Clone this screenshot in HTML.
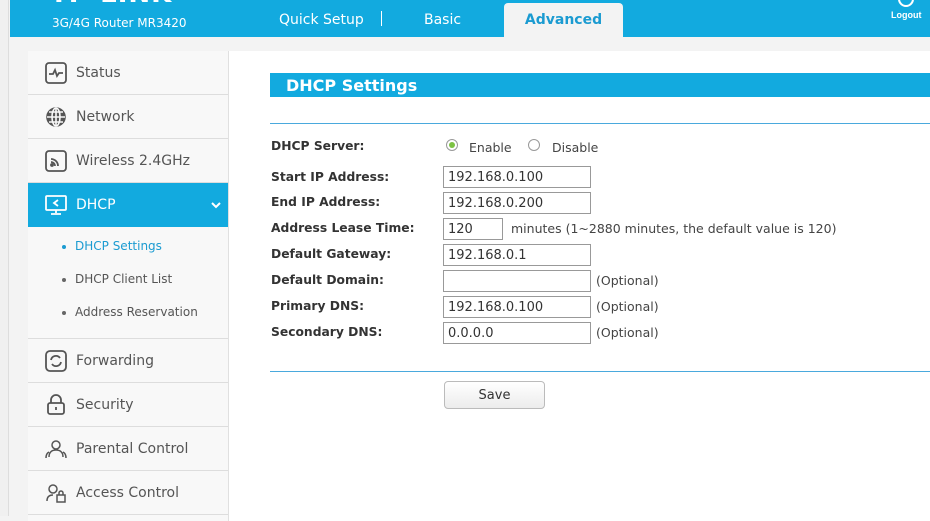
<!DOCTYPE html>
<html><head><meta charset="utf-8"><style>
*{margin:0;padding:0;box-sizing:border-box}
body{width:930px;height:516px;overflow:hidden;background:#f3f3f3;font-family:"DejaVu Sans","Liberation Sans",sans-serif;position:relative}
.strip{position:absolute;left:0;top:0;width:9px;height:516px;background:#f0f0f0;border-right:1px solid #ddd}
.hdr{position:absolute;left:10px;top:0;width:920px;height:37px;background:#12aadf}
.logo{position:absolute;left:40px;top:-21px;color:#fff;font:bold 26px "DejaVu Sans",sans-serif;letter-spacing:1px}
.model{position:absolute;left:42px;top:16px;color:#fff;font-size:12px}
.nav{position:absolute;top:12px;color:#fff;font-size:14px}
.sep{position:absolute;left:371px;top:11px;width:1px;height:15px;background:#fff}
.tab{position:absolute;left:494px;top:3px;width:119px;height:34px;background:#f3f3f3;border-radius:4px 4px 0 0;color:#1b9bd1;font:bold 14px "DejaVu Sans",sans-serif;text-align:center;line-height:34px}
.logout{position:absolute;left:881px;top:10px;color:#fff;font:bold 9px "Liberation Sans",sans-serif}
.lcirc{position:absolute;left:888px;top:-9px;width:16px;height:16px;border:2px solid #fff;border-radius:50%}
.side{position:absolute;left:28px;top:51px;width:201px;height:470px;background:#f8f8f8;border-right:1px solid #e0e0e0}
.it{height:44px;border-bottom:1px solid #ddd;font-size:14px;color:#555;position:relative}
.it svg{position:absolute;left:17px;top:11px}
.it span{position:absolute;left:48px;top:14px}
.it.act{background:#12aadf;color:#fff;border-bottom:none}
.sub{height:112px;border-bottom:1px solid #ddd;font-size:12px;color:#555;position:relative}
.sub div{position:absolute;left:47px}
.sub div:before{content:"";position:absolute;left:-13px;top:6px;width:4px;height:4px;border-radius:50%;background:#666}
.sub div.on:before{background:#1b9bd1}
.main{position:absolute;left:229px;top:51px;width:701px;height:470px;background:#fff}
.tbar{position:absolute;left:270px;top:73px;width:660px;height:24px;background:#12aadf;color:#fff;font:bold 16px "DejaVu Sans",sans-serif;padding-left:16px;line-height:25px}
.line{position:absolute;left:270px;width:660px;height:1px;background:#4aa9dd}
.lbl{position:absolute;left:271px;font:bold 12.3px "DejaVu Sans",sans-serif;color:#333}
.inp{position:absolute;left:443px;width:148px;height:22px;border:1px solid #999;font-size:13px;color:#333;padding-left:4px;line-height:22px}
.txt{position:absolute;font-size:12.5px;color:#444}
.btn{position:absolute;left:444px;top:381px;width:101px;height:28px;border:1px solid #bbb;border-radius:4px;background:linear-gradient(#fff,#ececec);text-align:center;line-height:28px;font-size:13px;color:#333}
.rad{position:absolute;width:12px;height:12px;border-radius:50%;border:1px solid #999;background:#fff}
</style></head><body>
<div class="strip"></div>
<div class="hdr">
<div class="logo">TP-LINK</div>
<div class="model">3G/4G Router MR3420</div>
<div class="nav" style="left:269px">Quick Setup</div>
<div class="sep"></div>
<div class="nav" style="left:414px">Basic</div>
<div class="tab">Advanced</div>
<div class="lcirc"></div>
<div class="logout">Logout</div>
</div>
<div class="side">
<div class="it"><svg width="22" height="22" viewBox="0 0 22 22" fill="none" stroke="#555" stroke-width="1.8"><rect x="1" y="1" width="20" height="20" rx="3"/><path d="M4 12h4l2-4 2 6 2-3h4"/></svg><span>Status</span></div>
<div class="it"><svg width="22" height="22" viewBox="0 0 22 22" fill="none" stroke="#555" stroke-width="1.6"><circle cx="11" cy="11" r="9" fill="#555"/><path d="M2 11h18M11 2v18M4 6h14M4 16h14" stroke="#f8f8f8"/><ellipse cx="11" cy="11" rx="4" ry="9" stroke="#f8f8f8"/></svg><span>Network</span></div>
<div class="it"><svg width="22" height="22" viewBox="0 0 22 22" fill="none" stroke="#555" stroke-width="1.8"><rect x="1" y="1" width="20" height="20" rx="3"/><path d="M6 9a7 7 0 0 1 7 7M6 12a4 4 0 0 1 4 4"/><circle cx="7" cy="15" r="1" fill="#555"/></svg><span>Wireless 2.4GHz</span></div>
<div class="it act"><svg width="22" height="22" viewBox="0 0 22 22" fill="none" stroke="#fff" stroke-width="1.8"><rect x="1" y="2" width="20" height="14" rx="1"/><path d="M11 16v3M6 20h10M13 6l-4 3 4 3"/></svg><span>DHCP</span><svg style="left:183px;top:19px" width="10" height="7" viewBox="0 0 10 7" fill="none" stroke="#fff" stroke-width="2"><path d="M1 1l4 4 4-4"/></svg></div>
<div class="sub">
<div class="on" style="top:12px;color:#1b9bd1">DHCP Settings</div>
<div style="top:45px">DHCP Client List</div>
<div style="top:78px">Address Reservation</div>
</div>
<div class="it"><svg width="22" height="22" viewBox="0 0 22 22" fill="none" stroke="#555" stroke-width="1.8"><rect x="1" y="1" width="20" height="20" rx="4"/><path d="M6 10a5 5 0 0 1 9-2M16 12a5 5 0 0 1-9 2"/></svg><span>Forwarding</span></div>
<div class="it"><svg width="22" height="22" viewBox="0 0 22 22" fill="none" stroke="#555" stroke-width="1.8"><path d="M6 9V6a5 5 0 0 1 10 0v3"/><rect x="3" y="9" width="16" height="11" rx="2"/><path d="M11 13v3"/></svg><span>Security</span></div>
<div class="it"><svg width="22" height="22" viewBox="0 0 22 22" fill="none" stroke="#555" stroke-width="1.5"><circle cx="11" cy="7" r="4"/><path d="M4 19c0-5 3-7 7-7s7 2 7 7M1 20c0-3 1-5 3-6M21 20c0-3-1-5-3-6"/></svg><span>Parental Control</span></div>
<div class="it"><svg width="22" height="22" viewBox="0 0 22 22" fill="none" stroke="#555" stroke-width="1.5"><circle cx="8" cy="7" r="4"/><path d="M2 19c0-4 2-6 6-6"/><rect x="12" y="13" width="8" height="7"/><path d="M14 13v-2a2 2 0 0 1 4 0v2"/></svg><span>Access Control</span></div>
</div>
<div class="main"></div>
<div class="tbar">DHCP Settings</div>
<div class="line" style="top:123px"></div>
<div class="lbl" style="top:139px">DHCP Server:</div>
<div class="rad" style="left:446px;top:139px"><div style="position:absolute;left:2px;top:2px;width:6px;height:6px;border-radius:50%;background:#7cc243"></div></div>
<div class="txt" style="left:469px;top:140px">Enable</div>
<div class="rad" style="left:528px;top:139px"></div>
<div class="txt" style="left:552px;top:140px">Disable</div>
<div class="lbl" style="top:170px">Start IP Address:</div><div class="inp" style="top:166px">192.168.0.100</div>
<div class="lbl" style="top:195px">End IP Address:</div><div class="inp" style="top:192px">192.168.0.200</div>
<div class="lbl" style="top:221px">Address Lease Time:</div><div class="inp" style="top:218px;width:60px">120</div>
<div class="txt" style="left:511px;top:221px">minutes (1~2880 minutes, the default value is 120)</div>
<div class="lbl" style="top:247px">Default Gateway:</div><div class="inp" style="top:244px">192.168.0.1</div>
<div class="lbl" style="top:273px">Default Domain:</div><div class="inp" style="top:270px"></div>
<div class="txt" style="left:596px;top:273px">(Optional)</div>
<div class="lbl" style="top:299px">Primary DNS:</div><div class="inp" style="top:296px">192.168.0.100</div>
<div class="txt" style="left:596px;top:299px">(Optional)</div>
<div class="lbl" style="top:325px">Secondary DNS:</div><div class="inp" style="top:322px">0.0.0.0</div>
<div class="txt" style="left:596px;top:325px">(Optional)</div>
<div class="line" style="top:371px"></div>
<div class="btn">Save</div>
</body></html>
